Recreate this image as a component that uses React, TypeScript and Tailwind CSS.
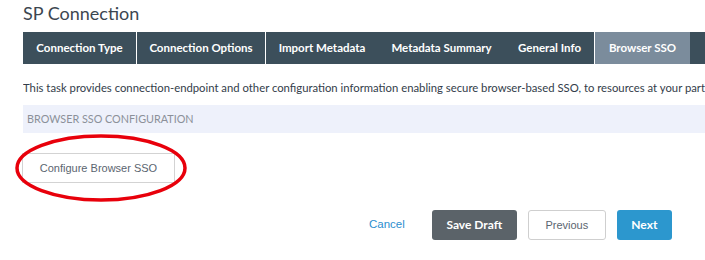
export default function App() {
  const tabs = [
    { label: 'Connection Type', w: 'w-[114px]', divider: true },
    { label: 'Connection Options', w: 'w-[129px]', divider: true },
    { label: 'Import Metadata', w: 'w-[112px]', divider: false },
    { label: 'Metadata Summary', w: 'w-[127px]', divider: false },
    { label: 'General Info', w: 'w-[90px]', divider: true },
  ]

  return (
    <div className="relative w-[705px] h-[260px] bg-white overflow-hidden font-['Lato','Liberation_Sans',sans-serif]">
      <div className="pl-[23px]">
        <h1 className="pt-[2px] h-[32px] text-[18px] leading-[22px] text-[#3c4650]">SP Connection</h1>

        {/* tabs */}
        <div className="flex h-[32px] bg-[#3c4f5b] w-[682px]">
          {tabs.map(t => (
            <div
              key={t.label}
              className={`${t.w} shrink-0 flex items-center justify-center text-[11.5px] font-bold text-white ${t.divider ? 'border-r border-white' : ''}`}
            >
              {t.label}
            </div>
          ))}
          <div className="w-[95px] shrink-0 flex items-center justify-center text-[11.5px] font-bold text-white bg-[#7b8c9c]">
            Browser SSO
          </div>
        </div>

        <div className="mt-[17px] w-[682px] overflow-hidden">
          <p className="text-[11.3px] leading-[14px] text-[#333d4a] whitespace-nowrap">
            This task provides connection-endpoint and other configuration information enabling secure browser-based SSO, to resources at your partner's site.
          </p>
        </div>

        <div className="mt-[10px] h-[28px] bg-[#eef1fb] flex items-center pl-[4px] text-[10.8px] text-[#8b9099] w-[682px]">
          BROWSER SSO CONFIGURATION
        </div>

        <button className="mt-[20px] h-[30px] w-[153px] -ml-[1px] border border-[#d3d3d3] bg-white text-[11px] text-[#5b6570] font-['Liberation_Sans',sans-serif]">
          Configure Browser SSO
        </button>

        <div className="mt-[27px] flex items-center">
          <span className="ml-[346px] text-[11.5px] text-[#2b8fcf] font-['Liberation_Sans',sans-serif]">Cancel</span>
          <button className="ml-[27px] h-[30px] w-[85px] rounded-[3px] bg-[#5b6369] text-white text-[12px] font-bold">Save Draft</button>
          <button className="ml-[11px] h-[30px] w-[78px] rounded-[3px] border border-[#cfcfcf] bg-white text-[#5b6570] text-[11px] font-['Liberation_Sans',sans-serif]">Previous</button>
          <button className="ml-[11px] h-[30px] w-[55px] rounded-[3px] bg-[#2c97ce] text-white text-[12px] font-bold">Next</button>
        </div>
      </div>

      {/* annotation */}
      <svg className="absolute left-0 top-0 pointer-events-none" width="705" height="260">
        <ellipse cx="101" cy="168" rx="84" ry="32" fill="none" stroke="#e8000b" strokeWidth="3.5" />
      </svg>
    </div>
  )
}
